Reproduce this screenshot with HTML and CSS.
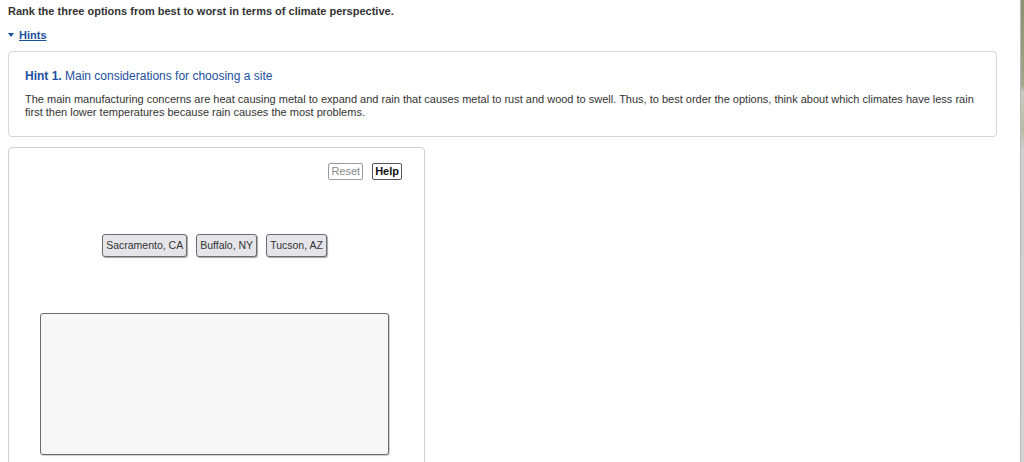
FILE: index.html
```html
<!DOCTYPE html>
<html lang="en">
<head>
    <meta charset="UTF-8">
    <title>Rank the options</title>
    <link rel="stylesheet" href="styles.css">
</head>
<body>
    <div class="page">
        <div class="content">
            <p class="question">Rank the three options from best to worst in terms of climate perspective.</p>

            <!-- hints toggle -->
            <div class="hints-toggle">
                <span class="arrow"></span>
                <a href="#" class="hints-link">Hints</a>
            </div>

            <div class="hint-box">
                <h3 class="hint-title"><strong>Hint 1.</strong> Main considerations for choosing a site</h3>
                <p class="hint-text">The main manufacturing concerns are heat causing metal to expand and rain that causes metal to rust and wood to swell. Thus, to best order the options, think about which climates have less rain first then lower temperatures because rain causes the most problems.</p>
            </div>

            <!-- ranking widget -->
            <div class="rank-panel">
                <div class="tools">
                    <button class="tool-btn reset">Reset</button>
                    <button class="tool-btn help">Help</button>
                </div>
                <div class="chips">
                    <div class="chip">Sacramento, CA</div>
                    <div class="chip">Buffalo, NY</div>
                    <div class="chip">Tucson, AZ</div>
                </div>
                <div class="drop-zone"></div>
            </div>
        </div>
        <div class="side-strip"></div>
    </div>
</body>
</html>
```

FILE: styles.css
```css
/* base */
html, body {
    margin: 0;
    height: 100%;
    overflow: hidden;
    background: #fff;
    font-family: "Liberation Sans", Arial, sans-serif;
    color: #333;
}

.page {
    display: flex;
    height: 100%;
}

.content {
    flex: 1;
    padding: 4px 23px 0 8px;
}

/* side strip on the right edge */
.side-strip {
    width: 3px;
    border-left: 1px solid #b8b8b8;
    background: linear-gradient(to bottom, #8d8f72 0, #a3a58c 85px, #c9cac0 92px, #b9bca4 130px, #cfcfcf 150px, #d4d4d4 100%);
}

.question {
    margin: 0;
    font-size: 11px;
    font-weight: bold;
    line-height: 14px;
}

/* hints */
.hints-toggle {
    margin-top: 8px;
    height: 18px;
    display: flex;
    align-items: center;
}

.arrow {
    width: 0;
    height: 0;
    border-left: 3px solid transparent;
    border-right: 3px solid transparent;
    border-top: 4px solid #1b4fa0;
    margin-right: 5px;
}

.hints-link {
    font-size: 11px;
    font-weight: bold;
    color: #1b4fa0;
}

.hint-box {
    margin-top: 7px;
    border: 1px solid #d6d6d6;
    border-radius: 4px;
    padding: 17px 16px 17px 16px;
}

.hint-title {
    margin: 0;
    font-size: 12px;
    font-weight: normal;
    line-height: 15px;
    color: #1b4fa0;
}

.hint-text {
    margin: 9px 0 0 0;
    font-size: 11px;
    line-height: 13px;
    color: #333;
}

/* ranking panel */
.rank-panel {
    margin-top: 10px;
    width: 415px;
    height: 340px;
    border: 1px solid #cfcfcf;
    border-radius: 4px;
    padding-top: 15px;
}

.tools {
    display: flex;
    justify-content: flex-end;
    gap: 9px;
    padding-right: 22px;
}

.tool-btn {
    font-family: "Liberation Sans", Arial, sans-serif;
    font-size: 11px;
    line-height: 13px;
    height: 17px;
    padding: 0 2px;
    background: #fff;
    border-radius: 2px;
    cursor: pointer;
}

.reset {
    color: #8a8a8a;
    border: 1px solid #9a9a9a;
}

.help {
    color: #111;
    font-weight: bold;
    border: 1px solid #555;
}

.chips {
    display: flex;
    justify-content: center;
    gap: 9px;
    margin-top: 54px;
    padding-right: 4px;
}

.chip {
    font-size: 10.5px;
    line-height: 21px;
    padding: 0 3px;
    color: #333;
    background: #e4e4e9;
    border: 1px solid #6b6b74;
    border-radius: 3px;
    box-shadow: 1px 1px 1px rgba(0, 0, 0, 0.35);
}

.drop-zone {
    margin: 56px 0 0 31px;
    width: 347px;
    height: 140px;
    background: #f7f7f7;
    border: 1px solid #6b6b74;
    border-radius: 3px;
    box-shadow: 1px 1px 1px rgba(0, 0, 0, 0.2);
}
```
